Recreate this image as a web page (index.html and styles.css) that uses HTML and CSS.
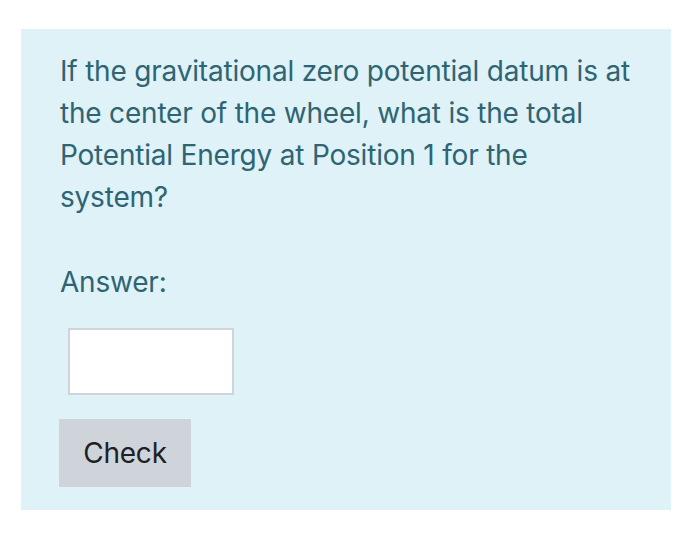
FILE: index.html
```html
<!DOCTYPE html>
<html>
<head>
<meta charset="utf-8">
<link rel="stylesheet" href="styles.css">
</head>
<body>
<div class="formulation">
  <p class="qtext">If the gravitational zero potential datum is at the center of the wheel, what is the total Potential Energy at Position 1 for the system?</p>
  <div class="answer-label">Answer:</div>
  <div class="answer-row"><input class="answer-input" type="text"></div>
  <div class="actions"><button class="btn-check" type="button">Check</button></div>
</div>
</body>
</html>
```

FILE: styles.css
```css
html, body {
  margin: 0;
  padding: 0;
  background: #ffffff;
}
body {
  font-family: Inter, "Liberation Sans", Arial, sans-serif;
  font-size: 28px;
  line-height: 42px;
  letter-spacing: -0.2px;
  color: #2f6473;
}
.formulation {
  margin: 29px 29px 24px 21px;
  padding: 21px 30px 23px 39px;
  background: #def2f8;
  height: 437px;
  box-sizing: content-box;
}
.qtext {
  margin: 0;
  width: 580px;
}
.answer-label {
  margin-top: 43px;
}
.answer-row {
  margin-top: 25px;
  padding-left: 8px;
  display: flex;
}
.answer-input {
  width: 166px;
  height: 67px;
  box-sizing: border-box;
  border: 2px solid #ced4da;
  background: #ffffff;
  margin: 0;
  padding: 0;
}
.actions {
  margin-top: 24px;
  display: flex;
}
.btn-check {
  width: 132px;
  height: 68px;
  margin: 0 0 0 -1px;
  border: none;
  background: #ced4da;
  color: #1d2125;
  font-family: Inter, "Liberation Sans", Arial, sans-serif;
  font-size: 28px;
  letter-spacing: -0.2px;
  padding: 0;
}
```
